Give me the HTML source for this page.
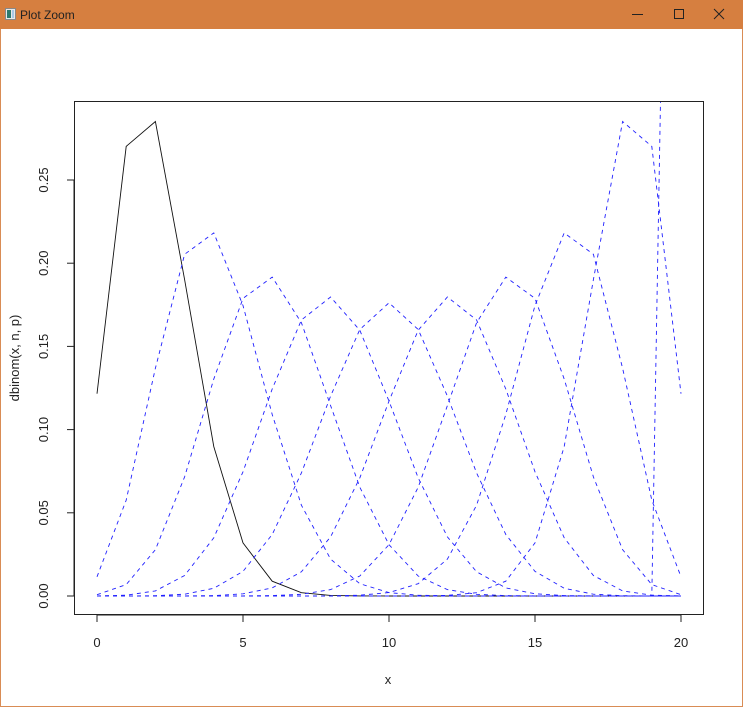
<!DOCTYPE html>
<html><head><meta charset="utf-8"><style>
html,body{margin:0;padding:0;background:#fff;}
body{width:743px;height:707px;position:relative;overflow:hidden;font-family:"Liberation Sans",Arial,sans-serif;}
.win{position:absolute;left:0;top:0;width:741px;height:705px;border:1px solid #d98c55;}
.tb{position:absolute;left:0;top:0;width:743px;height:29px;background:#d67f40;}
.tt{position:absolute;left:20px;top:8px;font-size:12px;color:#222;}
</style></head><body>
<div class="win"></div>
<div class="tb">
<svg width="743" height="29" style="position:absolute;left:0;top:0">
<rect x="5.5" y="8.5" width="10" height="11" fill="#e8e8e8" stroke="#888"/>
<rect x="7" y="10" width="4" height="8" fill="#2b7a6e"/>
<rect x="12" y="10" width="2" height="8" fill="#a8c8e8"/>
<line x1="443" y1="14.5" x2="454" y2="14.5" stroke="#222" stroke-width="1" transform="translate(189,0)"/>
<rect x="674.5" y="9.5" width="9" height="9" fill="none" stroke="#222"/>
<path d="M714 9 L724 19 M724 9 L714 19" stroke="#222" stroke-width="1"/>
</svg>
<div class="tt">Plot Zoom</div>
</div>
<svg id="p" width="743" height="707" style="position:absolute;left:0;top:0" font-family="Liberation Sans, Arial, sans-serif" font-size="13">
<defs><clipPath id="c"><rect x="74" y="101" width="630" height="514"/></clipPath></defs>
<g id="curves" clip-path="url(#c)"></g>
<rect x="74.5" y="101.5" width="629" height="513" fill="none" stroke="#222" stroke-width="1"/>
<g stroke="#222">
<line x1="97" y1="615" x2="681" y2="615"/>
<line x1="97" y1="615" x2="97" y2="622"/><line x1="243" y1="615" x2="243" y2="622"/>
<line x1="389" y1="615" x2="389" y2="622"/><line x1="535" y1="615" x2="535" y2="622"/>
<line x1="681" y1="615" x2="681" y2="622"/>
<line x1="74" y1="180" x2="74" y2="596"/>
<line x1="67" y1="596" x2="74" y2="596"/><line x1="67" y1="512.8" x2="74" y2="512.8"/>
<line x1="67" y1="429.6" x2="74" y2="429.6"/><line x1="67" y1="346.4" x2="74" y2="346.4"/>
<line x1="67" y1="263.2" x2="74" y2="263.2"/><line x1="67" y1="180" x2="74" y2="180"/>
</g>
<g fill="#222" text-anchor="middle">
<text x="97" y="647">0</text><text x="243" y="647">5</text><text x="389" y="647">10</text>
<text x="535" y="647">15</text><text x="681" y="647">20</text>
<text x="388" y="684">x</text>
<text transform="translate(48,596) rotate(-90)">0.00</text>
<text transform="translate(48,512.8) rotate(-90)">0.05</text>
<text transform="translate(48,429.6) rotate(-90)">0.10</text>
<text transform="translate(48,346.4) rotate(-90)">0.15</text>
<text transform="translate(48,263.2) rotate(-90)">0.20</text>
<text transform="translate(48,180) rotate(-90)">0.25</text>
<text transform="translate(19,358) rotate(-90)">dbinom(x, n, p)</text>
</g>
</svg>
<script>
function ch(n,k){var r=1;for(var i=1;i<=k;i++)r=r*(n-k+i)/i;return r;}
function db(x,n,p){return ch(n,x)*Math.pow(p,x)*Math.pow(1-p,n-x);}
var g=document.getElementById('curves'),s='';
var ps=[0.1,0.2,0.3,0.4,0.5,0.6,0.7,0.8,0.9,1.0];
ps.forEach(function(p,i){
 var d='';
 for(var x=0;x<=20;x++){var X=97+x*29.2,Y=596-db(x,20,p)*1664;d+=(x?'L':'M')+X.toFixed(1)+' '+Y.toFixed(1);}
 if(i==0)s+='<path d="'+d+'" fill="none" stroke="#111" stroke-width="0.9"/>';
 else s+='<path d="'+d+'" fill="none" stroke="#2020ff" stroke-width="0.9" stroke-dasharray="4 4"/>';
});
g.innerHTML=s;
</script>
</body></html>
